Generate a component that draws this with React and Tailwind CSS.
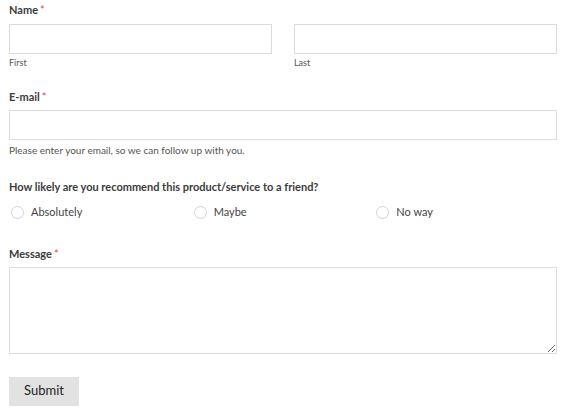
import { useState } from "react";

function FieldLabel({ children, required }) {
  return (
    <div className="text-[11px] font-bold leading-[14px] text-[#3c3c3c]">
      {children}
      {required && <span className="ml-[2px] font-normal text-[#e04b4b]">*</span>}
    </div>
  );
}

const inputCls =
  "block w-full border border-[#dcdcdc] bg-white outline-none focus:border-[#a0a0a0]";

function Radio({ name, value, label, checked, onChange }) {
  return (
    <label className="flex items-center gap-[7px] pl-[2px] text-[11px] text-[#444]">
      <input
        type="radio"
        name={name}
        value={value}
        checked={checked}
        onChange={() => onChange(value)}
        className="peer sr-only"
      />
      <span className="block h-[13px] w-[13px] rounded-full border border-[#d2d2d2] bg-white peer-checked:border-[5px] peer-checked:border-[#555]" />
      {label}
    </label>
  );
}

export default function App() {
  const [pick, setPick] = useState("");

  return (
    <form
      className="ml-[9px] w-[548px] pt-[3px] font-['Lato',sans-serif]"
      onSubmit={(e) => e.preventDefault()}
    >
      <FieldLabel required>Name</FieldLabel>
      <div className="mt-[7px] grid grid-cols-2 gap-[22px]">
        <div>
          <input className={`${inputCls} h-[30px] px-2`} />
          <div className="mt-[3px] text-[9px] leading-[12px] text-[#555]">First</div>
        </div>
        <div>
          <input className={`${inputCls} h-[30px] px-2`} />
          <div className="mt-[3px] text-[9px] leading-[12px] text-[#555]">Last</div>
        </div>
      </div>

      <div className="mt-[21px]">
        <FieldLabel required>E-mail</FieldLabel>
      </div>
      <input type="email" className={`${inputCls} mt-[6px] h-[30px] px-2`} />
      <div className="mt-[4px] text-[10px] leading-[12px] text-[#555]">
        Please enter your email, so we can follow up with you.
      </div>

      <div className="mt-[24px] text-[11px] font-bold leading-[14px] text-[#3c3c3c]">
        How likely are you recommend this product/service to a friend?
      </div>
      <div className="mt-[10px] grid grid-cols-3">
        <Radio name="rec" value="yes" label="Absolutely" checked={pick === "yes"} onChange={setPick} />
        <Radio name="rec" value="maybe" label="Maybe" checked={pick === "maybe"} onChange={setPick} />
        <Radio name="rec" value="no" label="No way" checked={pick === "no"} onChange={setPick} />
      </div>

      <div className="mt-[26px]">
        <FieldLabel required>Message</FieldLabel>
      </div>
      <textarea className={`${inputCls} mt-[6px] h-[87px] resize-y p-2`} />

      <button
        type="submit"
        className="mt-[23px] h-[29px] w-[70px] bg-[#e2e2e2] text-[13px] text-[#222]"
      >
        Submit
      </button>
    </form>
  );
}
